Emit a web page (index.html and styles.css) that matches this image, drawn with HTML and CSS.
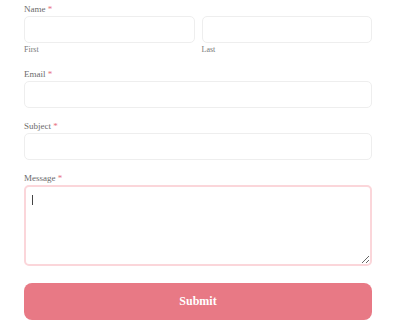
FILE: index.html
```html
<!DOCTYPE html>
<html lang="en">
<head>
  <meta charset="UTF-8">
  <meta name="viewport" content="width=device-width, initial-scale=1.0">
  <title>Contact</title>
  <link rel="stylesheet" href="styles.css">
</head>
<body>
  <form class="contact-form">
    <div class="field">
      <label class="label">Name <span class="req">*</span></label>
      <div class="name-row">
        <div class="name-col">
          <input class="input" type="text">
          <span class="sublabel">First</span>
        </div>
        <div class="name-col">
          <input class="input" type="text">
          <span class="sublabel">Last</span>
        </div>
      </div>
    </div>

    <div class="field">
      <label class="label">Email <span class="req">*</span></label>
      <input class="input" type="email">
    </div>

    <div class="field">
      <label class="label">Subject <span class="req">*</span></label>
      <input class="input" type="text">
    </div>

    <div class="field">
      <label class="label">Message <span class="req">*</span></label>
      <div class="textarea-wrap">
        <textarea class="textarea focused"></textarea>
        <span class="caret"></span>
      </div>
    </div>

    <button class="submit-btn" type="button">Submit</button>
  </form>
</body>
</html>
```

FILE: styles.css
```css
body {
  margin: 0;
  background: #fff;
  font-family: 'Liberation Serif', 'Times New Roman', serif;
}

.contact-form {
  padding: 3px 28px 0 24px;
}

.field {
  margin-bottom: 12px;
}

.label {
  display: block;
  font-size: 9px;
  line-height: 12px;
  color: #6b6b6b;
  margin-bottom: 1px;
}

.req {
  color: #e8707c;
}

.name-row {
  display: flex;
  gap: 7px;
}

.name-col {
  flex: 1;
  display: flex;
  flex-direction: column;
}

.sublabel {
  font-size: 8px;
  line-height: 12px;
  color: #777;
  margin-top: 1px;
}

.input {
  box-sizing: border-box;
  width: 100%;
  height: 27px;
  border: 1px solid #eeeeee;
  border-radius: 5px;
  background: #fff;
  outline: none;
  margin: 0;
  display: block;
}

.textarea-wrap {
  position: relative;
}

.textarea {
  box-sizing: border-box;
  display: block;
  width: 100%;
  height: 81px;
  margin: 0;
  border: 1px solid #eeeeee;
  border-radius: 5px;
  outline: none;
  resize: vertical;
}

.textarea.focused {
  border: 2px solid #fbd6da;
}

.caret {
  position: absolute;
  left: 8px;
  top: 10px;
  width: 1px;
  height: 10px;
  background: #444;
}

.submit-btn {
  display: block;
  width: 100%;
  height: 37px;
  margin-top: 17px;
  border: none;
  border-radius: 8px;
  background: #e87985;
  color: #fff;
  font-family: 'Liberation Serif', 'Times New Roman', serif;
  font-size: 12px;
  font-weight: bold;
  cursor: pointer;
}
```
